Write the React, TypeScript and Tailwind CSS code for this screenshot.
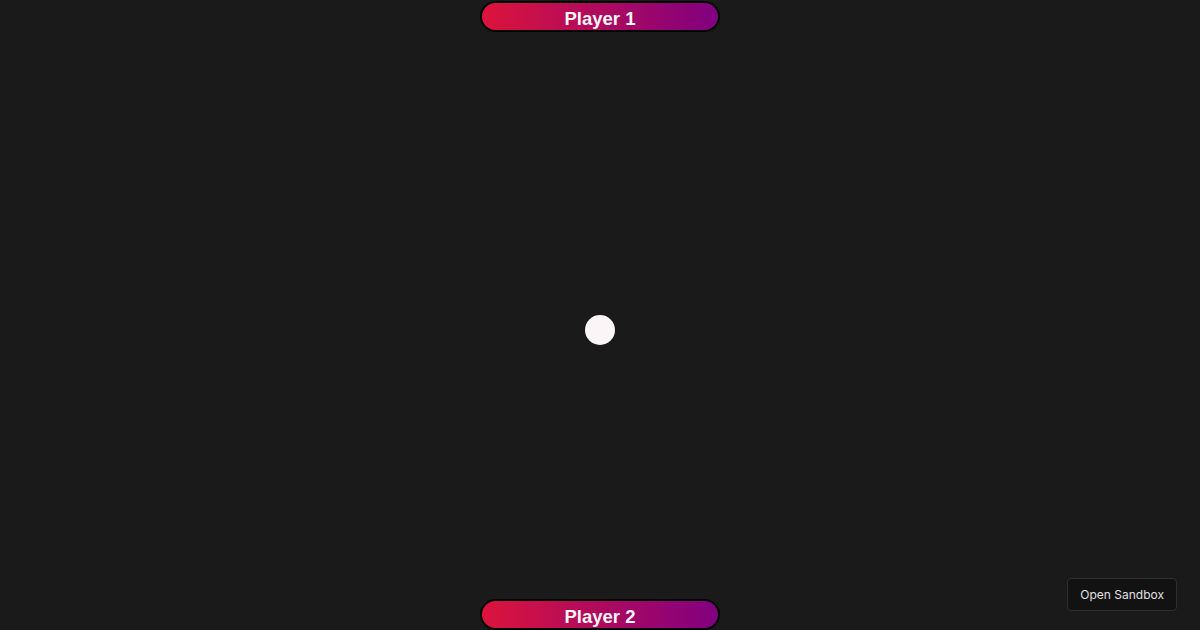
import React from "react";

function Paddle({ label }: { label: string }) {
  return (
    <div className="flex h-[31px] w-[240px] items-center justify-center rounded-full border-2 border-black bg-[linear-gradient(to_right,#dc143c,#800080)]">
      <span className="pt-[5px] font-['Liberation_Sans',Arial,sans-serif] text-[18.5px] font-bold leading-none text-[#f5f5f5]">
        {label}
      </span>
    </div>
  );
}

export default function App() {
  return (
    <div className="relative flex h-[630px] w-full flex-col items-center justify-between overflow-hidden bg-[#1a1a1a] pt-[1px]">
      {/* Top paddle */}
      <Paddle label="Player 1" />

      {/* Ball */}
      <div className="absolute left-[585px] top-[315px] h-[30px] w-[30px] rounded-full bg-[#fbf5f7]" />

      {/* Bottom paddle */}
      <Paddle label="Player 2" />

      {/* Sandbox button */}
      <button className="absolute bottom-[19px] right-[23px] flex h-[33px] items-center rounded-[4px] border border-[#2f2f2f] bg-[#121212] px-[12px] font-['Inter',sans-serif] text-[12px] text-[#e0e0e0]">
        Open Sandbox
      </button>
    </div>
  );
}
